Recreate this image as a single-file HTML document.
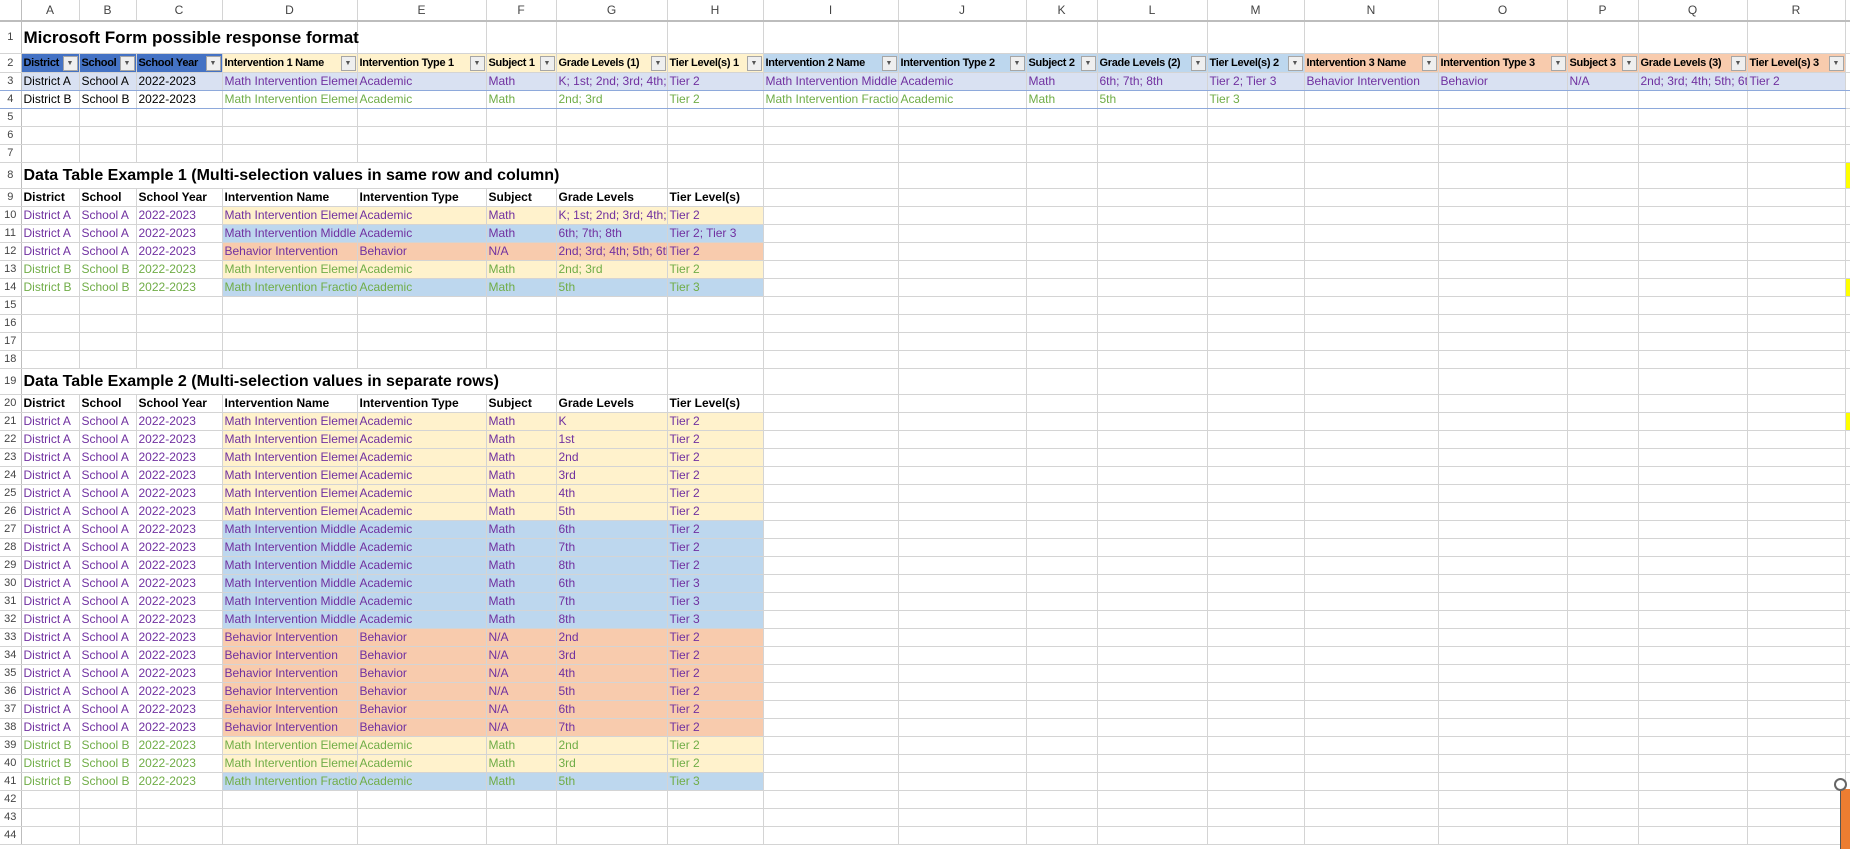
<!DOCTYPE html>
<html><head><meta charset="utf-8"><style>
body{margin:0;background:#fff;width:1850px;height:843px;overflow:hidden;font-family:"Liberation Sans",Arial,sans-serif;}
table{border-collapse:collapse;table-layout:fixed;width:1850px;font-size:12px;}
td{border-right:1px solid #d4d4d4;border-bottom:1px solid #d4d4d4;padding:0 2px;white-space:nowrap;overflow:hidden;height:17px;line-height:17px;color:#000;position:relative}
td.rh{text-align:center;color:#444;padding:0;font-size:11px;border-right:1px solid #bdbdbd}
tr.ch td{height:20px;text-align:center;color:#444;font-size:12px;border-bottom:2px solid #bdbdbd}
tr.t td{height:31px;line-height:31px}
tr.t td.tt{font-weight:bold;font-size:17px;overflow:visible}
tr.t2 td{height:25px;line-height:25px}
tr.t2 td.tt{font-weight:bold;font-size:16px;overflow:visible}
tr.hd td{height:18px;font-weight:bold;padding-right:17px;font-size:11px;letter-spacing:-0.3px}
tr.hd td.rh{padding:0;font-weight:normal;letter-spacing:0}
.f{position:absolute;right:1px;top:2px;width:13px;height:13px;background:#efefef;border:1px solid #a6a6a6;font-size:7px;line-height:13px;text-align:center;color:#555;font-weight:normal;letter-spacing:0}
.db{background:#4472c4}.y{background:#fff2cc}.b{background:#bdd7ee}.o{background:#f8cbad}
.p{color:#7030a0}.g{color:#70ad47}
tr.r3 td{background:#d9e1f2;border-bottom:1px solid #8ea9db}
tr.r3 td.rh,tr.r4 td.rh{background:#fff}
tr.r4 td{border-bottom:1px solid #8ea9db}
.bl{border-left:1px solid #000}
tr.sb td{font-weight:bold}
</style></head><body>
<table>
<colgroup><col style="width:21px"><col style="width:58px"><col style="width:57px"><col style="width:86px"><col style="width:135px"><col style="width:129px"><col style="width:70px"><col style="width:111px"><col style="width:96px"><col style="width:135px"><col style="width:128px"><col style="width:71px"><col style="width:110px"><col style="width:97px"><col style="width:134px"><col style="width:129px"><col style="width:71px"><col style="width:109px"><col style="width:98px"><col style="width:5px"></colgroup>
<tr class="ch"><td class="rh"></td><td>A</td><td>B</td><td>C</td><td>D</td><td>E</td><td>F</td><td>G</td><td>H</td><td>I</td><td>J</td><td>K</td><td>L</td><td>M</td><td>N</td><td>O</td><td>P</td><td>Q</td><td>R</td><td></td></tr>
<tr class="t"><td class="rh">1</td><td class="tt" colspan="4">Microsoft Form possible response format</td><td></td><td></td><td></td><td></td><td></td><td></td><td></td><td></td><td></td><td></td><td></td><td></td><td></td><td></td><td></td></tr>
<tr class="hd"><td class="rh">2</td><td class="db">District<span class="f">▼</span></td><td class="db">School<span class="f">▼</span></td><td class="db">School Year<span class="f">▼</span></td><td class="y">Intervention 1 Name<span class="f">▼</span></td><td class="y">Intervention Type 1<span class="f">▼</span></td><td class="y">Subject 1<span class="f">▼</span></td><td class="y">Grade Levels (1)<span class="f">▼</span></td><td class="y">Tier Level(s) 1<span class="f">▼</span></td><td class="b bl">Intervention 2 Name<span class="f">▼</span></td><td class="b">Intervention Type 2<span class="f">▼</span></td><td class="b">Subject 2<span class="f">▼</span></td><td class="b">Grade Levels (2)<span class="f">▼</span></td><td class="b">Tier Level(s) 2<span class="f">▼</span></td><td class="o bl">Intervention 3 Name<span class="f">▼</span></td><td class="o">Intervention Type 3<span class="f">▼</span></td><td class="o">Subject 3<span class="f">▼</span></td><td class="o">Grade Levels (3)<span class="f">▼</span></td><td class="o">Tier Level(s) 3<span class="f">▼</span></td><td></td></tr>
<tr class="r3"><td class="rh">3</td><td>District A</td><td>School A</td><td>2022-2023</td><td class="p">Math Intervention Elementary</td><td class="p">Academic</td><td class="p">Math</td><td class="p">K; 1st; 2nd; 3rd; 4th; 5th</td><td class="p">Tier 2</td><td class="p bl">Math Intervention Middle</td><td class="p">Academic</td><td class="p">Math</td><td class="p">6th; 7th; 8th</td><td class="p">Tier 2; Tier 3</td><td class="p bl">Behavior Intervention</td><td class="p">Behavior</td><td class="p">N/A</td><td class="p">2nd; 3rd; 4th; 5th; 6th</td><td class="p">Tier 2</td><td style="background:#fff"></td></tr>
<tr class="r4"><td class="rh">4</td><td>District B</td><td>School B</td><td>2022-2023</td><td class="g">Math Intervention Elementary</td><td class="g">Academic</td><td class="g">Math</td><td class="g">2nd; 3rd</td><td class="g">Tier 2</td><td class="g bl">Math Intervention Fractions</td><td class="g">Academic</td><td class="g">Math</td><td class="g">5th</td><td class="g">Tier 3</td><td class="bl"></td><td></td><td></td><td></td><td></td><td style="border-bottom-color:#d4d4d4"></td></tr>
<tr><td class="rh">5</td><td></td><td></td><td></td><td></td><td></td><td></td><td></td><td></td><td></td><td></td><td></td><td></td><td></td><td></td><td></td><td></td><td></td><td></td><td></td></tr>
<tr><td class="rh">6</td><td></td><td></td><td></td><td></td><td></td><td></td><td></td><td></td><td></td><td></td><td></td><td></td><td></td><td></td><td></td><td></td><td></td><td></td><td></td></tr>
<tr><td class="rh">7</td><td></td><td></td><td></td><td></td><td></td><td></td><td></td><td></td><td></td><td></td><td></td><td></td><td></td><td></td><td></td><td></td><td></td><td></td><td></td></tr>
<tr class="t2"><td class="rh">8</td><td class="tt" colspan="7">Data Table Example 1 (Multi-selection values in same row and column)</td><td></td><td></td><td></td><td></td><td></td><td></td><td></td><td></td><td></td><td></td><td></td><td style="background:#ffff00"></td></tr>
<tr class="sb"><td class="rh" style="font-weight:normal">9</td><td>District</td><td>School</td><td>School Year</td><td>Intervention Name</td><td>Intervention Type</td><td>Subject</td><td>Grade Levels</td><td>Tier Level(s)</td><td></td><td></td><td></td><td></td><td></td><td></td><td></td><td></td><td></td><td></td><td></td></tr>
<tr><td class="rh">10</td><td class="p">District A</td><td class="p">School A</td><td class="p">2022-2023</td><td class="p y">Math Intervention Elementary</td><td class="p y">Academic</td><td class="p y">Math</td><td class="p y">K; 1st; 2nd; 3rd; 4th; 5th</td><td class="p y">Tier 2</td><td></td><td></td><td></td><td></td><td></td><td></td><td></td><td></td><td></td><td></td><td></td></tr>
<tr><td class="rh">11</td><td class="p">District A</td><td class="p">School A</td><td class="p">2022-2023</td><td class="p b">Math Intervention Middle</td><td class="p b">Academic</td><td class="p b">Math</td><td class="p b">6th; 7th; 8th</td><td class="p b">Tier 2; Tier 3</td><td></td><td></td><td></td><td></td><td></td><td></td><td></td><td></td><td></td><td></td><td></td></tr>
<tr><td class="rh">12</td><td class="p">District A</td><td class="p">School A</td><td class="p">2022-2023</td><td class="p o">Behavior Intervention</td><td class="p o">Behavior</td><td class="p o">N/A</td><td class="p o">2nd; 3rd; 4th; 5th; 6th</td><td class="p o">Tier 2</td><td></td><td></td><td></td><td></td><td></td><td></td><td></td><td></td><td></td><td></td><td></td></tr>
<tr><td class="rh">13</td><td class="g">District B</td><td class="g">School B</td><td class="g">2022-2023</td><td class="g y">Math Intervention Elementary</td><td class="g y">Academic</td><td class="g y">Math</td><td class="g y">2nd; 3rd</td><td class="g y">Tier 2</td><td></td><td></td><td></td><td></td><td></td><td></td><td></td><td></td><td></td><td></td><td></td></tr>
<tr><td class="rh">14</td><td class="g">District B</td><td class="g">School B</td><td class="g">2022-2023</td><td class="g b">Math Intervention Fractions</td><td class="g b">Academic</td><td class="g b">Math</td><td class="g b">5th</td><td class="g b">Tier 3</td><td></td><td></td><td></td><td></td><td></td><td></td><td></td><td></td><td></td><td></td><td style="background:#ffff00"></td></tr>
<tr><td class="rh">15</td><td></td><td></td><td></td><td></td><td></td><td></td><td></td><td></td><td></td><td></td><td></td><td></td><td></td><td></td><td></td><td></td><td></td><td></td><td></td></tr>
<tr><td class="rh">16</td><td></td><td></td><td></td><td></td><td></td><td></td><td></td><td></td><td></td><td></td><td></td><td></td><td></td><td></td><td></td><td></td><td></td><td></td><td></td></tr>
<tr><td class="rh">17</td><td></td><td></td><td></td><td></td><td></td><td></td><td></td><td></td><td></td><td></td><td></td><td></td><td></td><td></td><td></td><td></td><td></td><td></td><td></td></tr>
<tr><td class="rh">18</td><td></td><td></td><td></td><td></td><td></td><td></td><td></td><td></td><td></td><td></td><td></td><td></td><td></td><td></td><td></td><td></td><td></td><td></td><td></td></tr>
<tr class="t2"><td class="rh">19</td><td class="tt" colspan="6">Data Table Example 2 (Multi-selection values in separate rows)</td><td></td><td></td><td></td><td></td><td></td><td></td><td></td><td></td><td></td><td></td><td></td><td></td></tr>
<tr class="sb"><td class="rh" style="font-weight:normal">20</td><td>District</td><td>School</td><td>School Year</td><td>Intervention Name</td><td>Intervention Type</td><td>Subject</td><td>Grade Levels</td><td>Tier Level(s)</td><td></td><td></td><td></td><td></td><td></td><td></td><td></td><td></td><td></td><td></td><td></td></tr>
<tr><td class="rh">21</td><td class="p">District A</td><td class="p">School A</td><td class="p">2022-2023</td><td class="p y">Math Intervention Elementary</td><td class="p y">Academic</td><td class="p y">Math</td><td class="p y">K</td><td class="p y">Tier 2</td><td></td><td></td><td></td><td></td><td></td><td></td><td></td><td></td><td></td><td></td><td style="background:#ffff00"></td></tr>
<tr><td class="rh">22</td><td class="p">District A</td><td class="p">School A</td><td class="p">2022-2023</td><td class="p y">Math Intervention Elementary</td><td class="p y">Academic</td><td class="p y">Math</td><td class="p y">1st</td><td class="p y">Tier 2</td><td></td><td></td><td></td><td></td><td></td><td></td><td></td><td></td><td></td><td></td><td></td></tr>
<tr><td class="rh">23</td><td class="p">District A</td><td class="p">School A</td><td class="p">2022-2023</td><td class="p y">Math Intervention Elementary</td><td class="p y">Academic</td><td class="p y">Math</td><td class="p y">2nd</td><td class="p y">Tier 2</td><td></td><td></td><td></td><td></td><td></td><td></td><td></td><td></td><td></td><td></td><td></td></tr>
<tr><td class="rh">24</td><td class="p">District A</td><td class="p">School A</td><td class="p">2022-2023</td><td class="p y">Math Intervention Elementary</td><td class="p y">Academic</td><td class="p y">Math</td><td class="p y">3rd</td><td class="p y">Tier 2</td><td></td><td></td><td></td><td></td><td></td><td></td><td></td><td></td><td></td><td></td><td></td></tr>
<tr><td class="rh">25</td><td class="p">District A</td><td class="p">School A</td><td class="p">2022-2023</td><td class="p y">Math Intervention Elementary</td><td class="p y">Academic</td><td class="p y">Math</td><td class="p y">4th</td><td class="p y">Tier 2</td><td></td><td></td><td></td><td></td><td></td><td></td><td></td><td></td><td></td><td></td><td></td></tr>
<tr><td class="rh">26</td><td class="p">District A</td><td class="p">School A</td><td class="p">2022-2023</td><td class="p y">Math Intervention Elementary</td><td class="p y">Academic</td><td class="p y">Math</td><td class="p y">5th</td><td class="p y">Tier 2</td><td></td><td></td><td></td><td></td><td></td><td></td><td></td><td></td><td></td><td></td><td></td></tr>
<tr><td class="rh">27</td><td class="p">District A</td><td class="p">School A</td><td class="p">2022-2023</td><td class="p b">Math Intervention Middle</td><td class="p b">Academic</td><td class="p b">Math</td><td class="p b">6th</td><td class="p b">Tier 2</td><td></td><td></td><td></td><td></td><td></td><td></td><td></td><td></td><td></td><td></td><td></td></tr>
<tr><td class="rh">28</td><td class="p">District A</td><td class="p">School A</td><td class="p">2022-2023</td><td class="p b">Math Intervention Middle</td><td class="p b">Academic</td><td class="p b">Math</td><td class="p b">7th</td><td class="p b">Tier 2</td><td></td><td></td><td></td><td></td><td></td><td></td><td></td><td></td><td></td><td></td><td></td></tr>
<tr><td class="rh">29</td><td class="p">District A</td><td class="p">School A</td><td class="p">2022-2023</td><td class="p b">Math Intervention Middle</td><td class="p b">Academic</td><td class="p b">Math</td><td class="p b">8th</td><td class="p b">Tier 2</td><td></td><td></td><td></td><td></td><td></td><td></td><td></td><td></td><td></td><td></td><td></td></tr>
<tr><td class="rh">30</td><td class="p">District A</td><td class="p">School A</td><td class="p">2022-2023</td><td class="p b">Math Intervention Middle</td><td class="p b">Academic</td><td class="p b">Math</td><td class="p b">6th</td><td class="p b">Tier 3</td><td></td><td></td><td></td><td></td><td></td><td></td><td></td><td></td><td></td><td></td><td></td></tr>
<tr><td class="rh">31</td><td class="p">District A</td><td class="p">School A</td><td class="p">2022-2023</td><td class="p b">Math Intervention Middle</td><td class="p b">Academic</td><td class="p b">Math</td><td class="p b">7th</td><td class="p b">Tier 3</td><td></td><td></td><td></td><td></td><td></td><td></td><td></td><td></td><td></td><td></td><td></td></tr>
<tr><td class="rh">32</td><td class="p">District A</td><td class="p">School A</td><td class="p">2022-2023</td><td class="p b">Math Intervention Middle</td><td class="p b">Academic</td><td class="p b">Math</td><td class="p b">8th</td><td class="p b">Tier 3</td><td></td><td></td><td></td><td></td><td></td><td></td><td></td><td></td><td></td><td></td><td></td></tr>
<tr><td class="rh">33</td><td class="p">District A</td><td class="p">School A</td><td class="p">2022-2023</td><td class="p o">Behavior Intervention</td><td class="p o">Behavior</td><td class="p o">N/A</td><td class="p o">2nd</td><td class="p o">Tier 2</td><td></td><td></td><td></td><td></td><td></td><td></td><td></td><td></td><td></td><td></td><td></td></tr>
<tr><td class="rh">34</td><td class="p">District A</td><td class="p">School A</td><td class="p">2022-2023</td><td class="p o">Behavior Intervention</td><td class="p o">Behavior</td><td class="p o">N/A</td><td class="p o">3rd</td><td class="p o">Tier 2</td><td></td><td></td><td></td><td></td><td></td><td></td><td></td><td></td><td></td><td></td><td></td></tr>
<tr><td class="rh">35</td><td class="p">District A</td><td class="p">School A</td><td class="p">2022-2023</td><td class="p o">Behavior Intervention</td><td class="p o">Behavior</td><td class="p o">N/A</td><td class="p o">4th</td><td class="p o">Tier 2</td><td></td><td></td><td></td><td></td><td></td><td></td><td></td><td></td><td></td><td></td><td></td></tr>
<tr><td class="rh">36</td><td class="p">District A</td><td class="p">School A</td><td class="p">2022-2023</td><td class="p o">Behavior Intervention</td><td class="p o">Behavior</td><td class="p o">N/A</td><td class="p o">5th</td><td class="p o">Tier 2</td><td></td><td></td><td></td><td></td><td></td><td></td><td></td><td></td><td></td><td></td><td></td></tr>
<tr><td class="rh">37</td><td class="p">District A</td><td class="p">School A</td><td class="p">2022-2023</td><td class="p o">Behavior Intervention</td><td class="p o">Behavior</td><td class="p o">N/A</td><td class="p o">6th</td><td class="p o">Tier 2</td><td></td><td></td><td></td><td></td><td></td><td></td><td></td><td></td><td></td><td></td><td></td></tr>
<tr><td class="rh">38</td><td class="p">District A</td><td class="p">School A</td><td class="p">2022-2023</td><td class="p o">Behavior Intervention</td><td class="p o">Behavior</td><td class="p o">N/A</td><td class="p o">7th</td><td class="p o">Tier 2</td><td></td><td></td><td></td><td></td><td></td><td></td><td></td><td></td><td></td><td></td><td></td></tr>
<tr><td class="rh">39</td><td class="g">District B</td><td class="g">School B</td><td class="g">2022-2023</td><td class="g y">Math Intervention Elementary</td><td class="g y">Academic</td><td class="g y">Math</td><td class="g y">2nd</td><td class="g y">Tier 2</td><td></td><td></td><td></td><td></td><td></td><td></td><td></td><td></td><td></td><td></td><td></td></tr>
<tr><td class="rh">40</td><td class="g">District B</td><td class="g">School B</td><td class="g">2022-2023</td><td class="g y">Math Intervention Elementary</td><td class="g y">Academic</td><td class="g y">Math</td><td class="g y">3rd</td><td class="g y">Tier 2</td><td></td><td></td><td></td><td></td><td></td><td></td><td></td><td></td><td></td><td></td><td></td></tr>
<tr><td class="rh">41</td><td class="g">District B</td><td class="g">School B</td><td class="g">2022-2023</td><td class="g b">Math Intervention Fractions</td><td class="g b">Academic</td><td class="g b">Math</td><td class="g b">5th</td><td class="g b">Tier 3</td><td></td><td></td><td></td><td></td><td></td><td></td><td></td><td></td><td></td><td></td><td></td></tr>
<tr><td class="rh">42</td><td></td><td></td><td></td><td></td><td></td><td></td><td></td><td></td><td></td><td></td><td></td><td></td><td></td><td></td><td></td><td></td><td></td><td></td><td></td></tr>
<tr><td class="rh">43</td><td></td><td></td><td></td><td></td><td></td><td></td><td></td><td></td><td></td><td></td><td></td><td></td><td></td><td></td><td></td><td></td><td></td><td></td><td></td></tr>
<tr><td class="rh">44</td><td></td><td></td><td></td><td></td><td></td><td></td><td></td><td></td><td></td><td></td><td></td><td></td><td></td><td></td><td></td><td></td><td></td><td></td><td></td></tr>
</table>
<div style="position:absolute;left:1840px;top:789px;width:10px;height:60px;background:#ed7d31;border-left:1px solid #555"></div>
<div style="position:absolute;left:1834px;top:778px;width:9px;height:9px;border:2px solid #666;border-radius:50%;background:#fff"></div>
</body></html>
